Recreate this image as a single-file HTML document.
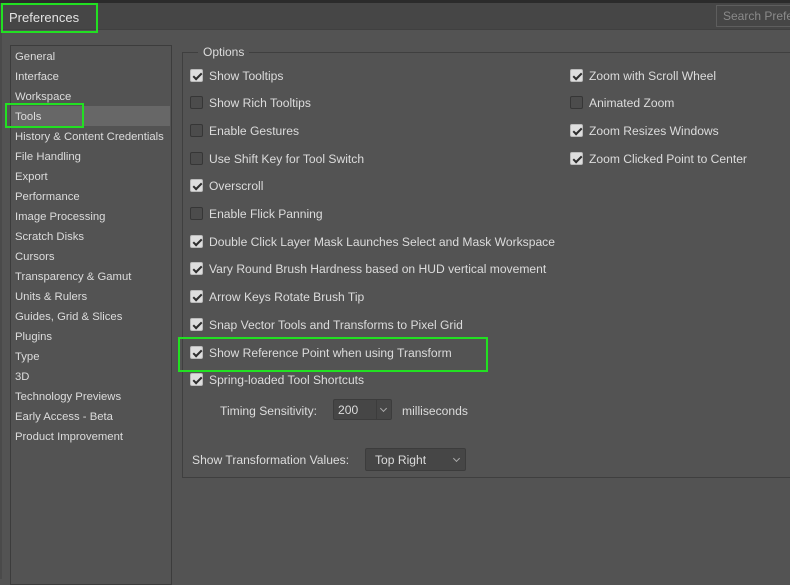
<!DOCTYPE html>
<html><head><meta charset="utf-8"><style>
*{margin:0;padding:0;box-sizing:border-box}
body{width:790px;height:579px;background:#535353;font-family:"Liberation Sans",sans-serif;font-size:12px;color:#dcdcdc;position:relative;overflow:hidden}
.abs{position:absolute}
.top{left:0;top:0;width:790px;height:3px;background:#2b2b2b}
.title{left:0;top:3px;width:790px;height:27px;background:#464646;border-bottom:1px solid #404040}
.search{left:716px;top:5px;width:80px;height:22px;border:1px solid #5e5e5e;color:#8a8a8a;font-size:12px;padding:3px 0 0 6px;background:#464646}
.side{left:10px;top:45px;width:162px;height:540px;border:1px solid #3c3c3c;background:#535353}
.item{position:absolute;left:15px;font-size:11.3px;line-height:14px;white-space:nowrap}
.sel{left:11px;top:106px;width:159px;height:20px;background:#676767}
.grp{left:182px;top:52px;width:620px;height:426px;border:1px solid #3f3f3f}
.leg{left:198px;top:45px;background:#535353;padding:0 5px;font-size:12px}
.cb{position:absolute;width:13px;height:13px;border-radius:2px;border:1px solid #363636;background:#4c4c4c}
.cb.on{background:#dedede;border-color:#bbb}
.cb.on::after{content:"";position:absolute;left:3.5px;top:1px;width:3px;height:7px;border:solid #2e2e2e;border-width:0 2px 2px 0;transform:rotate(45deg)}
.lbl{position:absolute;white-space:nowrap;font-size:12.1px;line-height:14px}
.g{position:absolute;border:2px solid #22e022}
.sel2{border:1px solid #3c3c3c;background:#464646;border-radius:2px}
.chev{position:absolute;width:5px;height:5px;border:solid #aaa;border-width:0 1px 1px 0;transform:rotate(45deg)}
.leftline{left:0;top:30px;width:2px;height:549px;background:#4a4a4a}
</style></head><body>
<div class="abs top"></div>
<div class="abs title"><div class="abs" style="left:9px;top:7px;font-size:13px;color:#e4e4e4">Preferences</div></div>
<div class="abs search">Search Prefe</div>
<div class="abs leftline"></div>
<div class="abs side"></div>
<div class="abs sel"></div>
<div class="item" style="top:50px">General</div>
<div class="item" style="top:70px">Interface</div>
<div class="item" style="top:90px">Workspace</div>
<div class="item" style="top:110px">Tools</div>
<div class="item" style="top:130px">History &amp; Content Credentials</div>
<div class="item" style="top:150px">File Handling</div>
<div class="item" style="top:170px">Export</div>
<div class="item" style="top:190px">Performance</div>
<div class="item" style="top:210px">Image Processing</div>
<div class="item" style="top:230px">Scratch Disks</div>
<div class="item" style="top:250px">Cursors</div>
<div class="item" style="top:270px">Transparency &amp; Gamut</div>
<div class="item" style="top:290px">Units &amp; Rulers</div>
<div class="item" style="top:310px">Guides, Grid &amp; Slices</div>
<div class="item" style="top:330px">Plugins</div>
<div class="item" style="top:350px">Type</div>
<div class="item" style="top:370px">3D</div>
<div class="item" style="top:390px">Technology Previews</div>
<div class="item" style="top:410px">Early Access - Beta</div>
<div class="item" style="top:430px">Product Improvement</div>

<div class="abs grp"></div>
<div class="abs leg">Options</div>

<div class="cb on" style="left:190px;top:69px"></div><div class="lbl" style="left:209px;top:69px">Show Tooltips</div>
<div class="cb" style="left:190px;top:96px"></div><div class="lbl" style="left:209px;top:96px">Show Rich Tooltips</div>
<div class="cb" style="left:190px;top:124px"></div><div class="lbl" style="left:209px;top:124px">Enable Gestures</div>
<div class="cb" style="left:190px;top:152px"></div><div class="lbl" style="left:209px;top:152px">Use Shift Key for Tool Switch</div>
<div class="cb on" style="left:190px;top:179px"></div><div class="lbl" style="left:209px;top:179px">Overscroll</div>
<div class="cb" style="left:190px;top:207px"></div><div class="lbl" style="left:209px;top:207px">Enable Flick Panning</div>
<div class="cb on" style="left:190px;top:235px"></div><div class="lbl" style="left:209px;top:235px">Double Click Layer Mask Launches Select and Mask Workspace</div>
<div class="cb on" style="left:190px;top:262px"></div><div class="lbl" style="left:209px;top:262px">Vary Round Brush Hardness based on HUD vertical movement</div>
<div class="cb on" style="left:190px;top:290px"></div><div class="lbl" style="left:209px;top:290px">Arrow Keys Rotate Brush Tip</div>
<div class="cb on" style="left:190px;top:318px"></div><div class="lbl" style="left:209px;top:318px">Snap Vector Tools and Transforms to Pixel Grid</div>
<div class="cb on" style="left:190px;top:346px"></div><div class="lbl" style="left:209px;top:346px">Show Reference Point when using Transform</div>
<div class="cb on" style="left:190px;top:373px"></div><div class="lbl" style="left:209px;top:373px">Spring-loaded Tool Shortcuts</div>

<div class="cb on" style="left:570px;top:69px"></div><div class="lbl" style="left:589px;top:69px">Zoom with Scroll Wheel</div>
<div class="cb" style="left:570px;top:96px"></div><div class="lbl" style="left:589px;top:96px">Animated Zoom</div>
<div class="cb on" style="left:570px;top:124px"></div><div class="lbl" style="left:589px;top:124px">Zoom Resizes Windows</div>
<div class="cb on" style="left:570px;top:152px"></div><div class="lbl" style="left:589px;top:152px">Zoom Clicked Point to Center</div>

<div class="lbl" style="left:220px;top:404px">Timing Sensitivity:</div>
<div class="abs sel2" style="left:333px;top:399px;width:59px;height:21px"></div>
<div class="abs" style="left:376px;top:400px;width:1px;height:19px;background:#3c3c3c"></div>
<div class="lbl" style="left:338px;top:403px">200</div>
<div class="chev" style="left:381px;top:406px"></div>
<div class="lbl" style="left:402px;top:404px">milliseconds</div>

<div class="lbl" style="left:192px;top:453px">Show Transformation Values:</div>
<div class="abs sel2" style="left:365px;top:448px;width:101px;height:23px"></div>
<div class="lbl" style="left:375px;top:453px">Top Right</div>
<div class="chev" style="left:454px;top:456px"></div>

<div class="g" style="left:1px;top:3px;width:97px;height:30px"></div>
<div class="g" style="left:5px;top:103px;width:79px;height:25px"></div>
<div class="g" style="left:178px;top:337px;width:310px;height:35px"></div>
</body></html>
